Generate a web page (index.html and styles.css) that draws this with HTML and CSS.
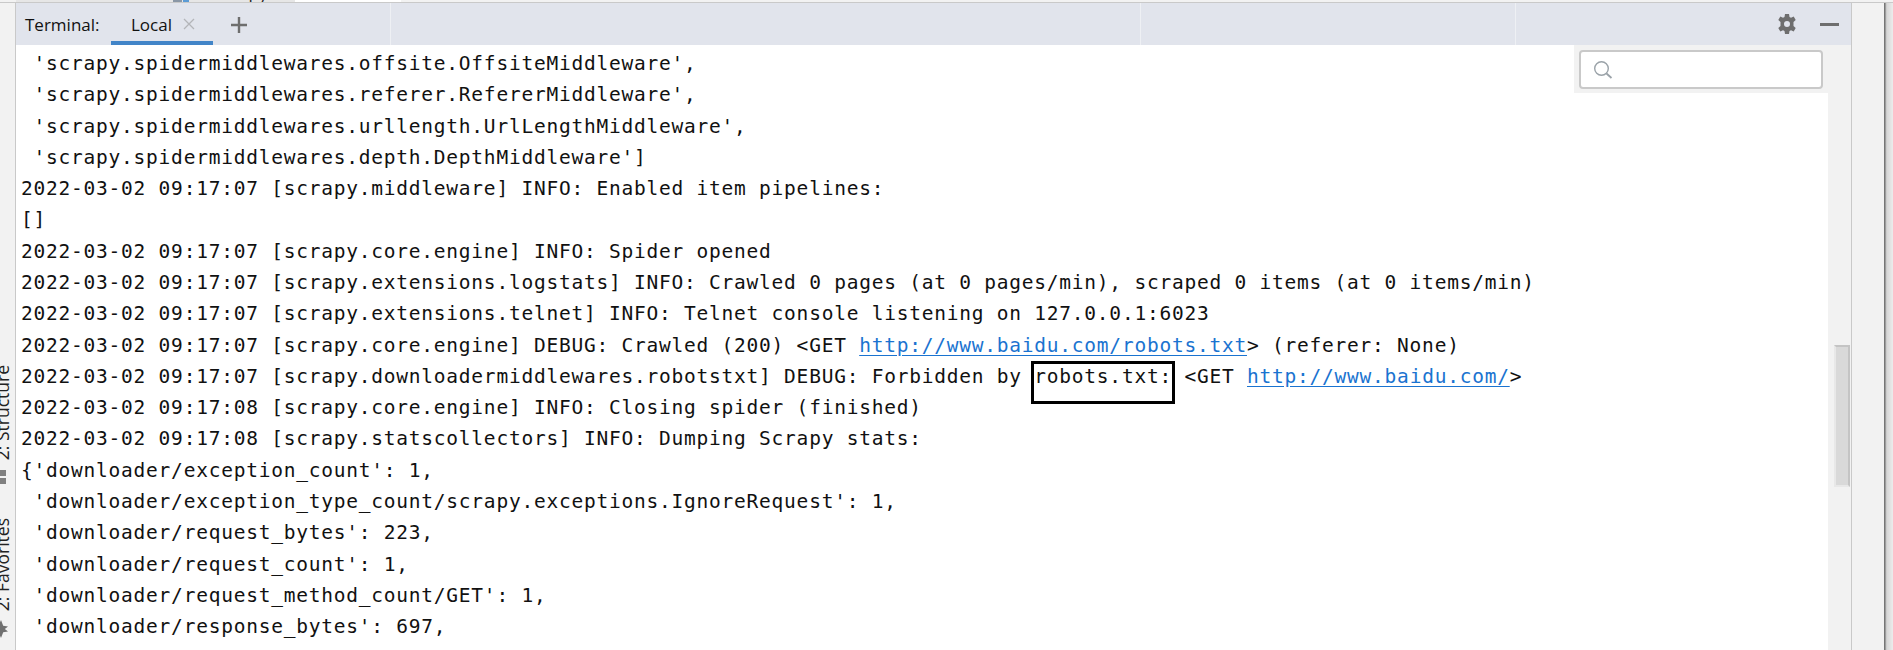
FILE: index.html
```html
<!DOCTYPE html>
<html lang="en">
<head>
<meta charset="utf-8">
<title>Terminal</title>
<link rel="stylesheet" href="styles.css">
</head>
<body>
<div class="window">
  <div class="topstrip">
    <svg class="strip-icon" width="16" height="2" viewBox="0 0 16 2"><path fill="#8a97a6" d="M0 0h9v2H0z"/><path fill="#5b9bd5" d="M10 0h6v2h-6z"/></svg>
    <span class="strip-text">baidu.py</span>
    <span class="strip-tab"></span>
  </div>
  <div class="main">
    <aside class="leftbar">
      <div class="side-item side-structure"><span class="side-label">2: Structure</span>
        <svg class="side-icon side-grid" width="6" height="14" viewBox="0 0 6 14"><path fill="#808080" d="M0 0h6v6H0zM0 8h6v6H0z"/></svg>
      </div>
      <div class="side-item side-favorites"><span class="side-label">2: Favorites</span>
        <svg class="side-icon side-star" width="8" height="18" viewBox="8 0 8 18"><path fill="#707070" d="M0 9l5.800-1.800L9 0l2.200 5.800L16 6.500l-3.200 2.500L16 11.500l-4.800.7L9 18l-3.200-7.200z"/></svg>
      </div>
    </aside>
    <section class="panel">
      <header class="tabbar">
        <span class="term-label">Terminal:</span>
        <div class="tab"><span>Local</span>
          <svg class="tab-close" width="12" height="12" viewBox="0 0 12 12"><path d="M1 1l10 10M11 1L1 11" stroke="#b3b5b9" stroke-width="1.300" fill="none"/></svg>
        </div>
        <svg class="tab-add" width="16" height="16" viewBox="0 0 16 16"><path d="M8 0v16M0 8h16" stroke="#6e6e6e" stroke-width="2.400" fill="none"/></svg>
        <i class="divider d1"></i><i class="divider d2"></i><i class="divider d3"></i>
        <svg class="gear" width="20" height="20" viewBox="0 0 20 20"><path fill-rule="evenodd" fill="#6e6e6e" d="M8 0h4l.5 2.900 1.500.8L16.700 2.600l2 3.500-2.200 1.900v4l2.200 1.900-2 3.500-2.700-1.100-1.500.8L12 20H8l-.5-2.900-1.500-.8-2.700 1.100-2-3.500 2.200-1.900V8L1.300 6.100l2-3.500L6 3.700l1.500-.8zM10 7a3 3 0 1 0 0 6 3 3 0 0 0 0-6z"/></svg>
        <i class="minimize"></i>
      </header>
      <div class="content">
        <pre class="log"> 'scrapy.spidermiddlewares.offsite.OffsiteMiddleware',
 'scrapy.spidermiddlewares.referer.RefererMiddleware',
 'scrapy.spidermiddlewares.urllength.UrlLengthMiddleware',
 'scrapy.spidermiddlewares.depth.DepthMiddleware']
2022-03-02 09:17:07 [scrapy.middleware] INFO: Enabled item pipelines:
[]
2022-03-02 09:17:07 [scrapy.core.engine] INFO: Spider opened
2022-03-02 09:17:07 [scrapy.extensions.logstats] INFO: Crawled 0 pages (at 0 pages/min), scraped 0 items (at 0 items/min)
2022-03-02 09:17:07 [scrapy.extensions.telnet] INFO: Telnet console listening on 127.0.0.1:6023
2022-03-02 09:17:07 [scrapy.core.engine] DEBUG: Crawled (200) &lt;GET <a class="link">http://www.baidu.com/robots.txt</a>&gt; (referer: None)
2022-03-02 09:17:07 [scrapy.downloadermiddlewares.robotstxt] DEBUG: Forbidden by <span class="boxed">robots.txt:</span> &lt;GET <a class="link">http://www.baidu.com/</a>&gt;
2022-03-02 09:17:08 [scrapy.core.engine] INFO: Closing spider (finished)
2022-03-02 09:17:08 [scrapy.statscollectors] INFO: Dumping Scrapy stats:
{'downloader/exception_count': 1,
 'downloader/exception_type_count/scrapy.exceptions.IgnoreRequest': 1,
 'downloader/request_bytes': 223,
 'downloader/request_count': 1,
 'downloader/request_method_count/GET': 1,
 'downloader/response_bytes': 697,</pre>
        <div class="search-wrap">
          <div class="search">
            <svg width="20" height="20" viewBox="0 0 20 20"><circle cx="8.500" cy="8.500" r="6.800" fill="none" stroke="#9aa2a8" stroke-width="1.400"/><path d="M13.500 13.500l5 4.500" stroke="#9aa2a8" stroke-width="1.800"/></svg>
          </div>
        </div>
      </div>
    </section>
    <aside class="scrolltrack"><div class="thumb"></div></aside>
    <aside class="rightbar"></aside>
    <div class="edge"></div>
  </div>
</div>
</body>
</html>
```
FILE: styles.css
```css
* { box-sizing: border-box; }
html, body { margin: 0; padding: 0; height: 100%; overflow: hidden; background: #fff; }
.window { width: 1893px; height: 650px; display: flex; flex-direction: column; font-family: "Open Sans", "Liberation Sans", sans-serif; }
.topstrip { height: 3px; background: linear-gradient(90deg, #f2f2f2 16px, #e6e6e6 16px, #e6e6e6 295px, #f2f2f2 295px); border-bottom: 1px solid #c9c9c9; flex: none; display: flex; overflow: hidden; align-items: flex-end; position: relative; }
.strip-icon { position: absolute; left: 173px; top: 0; }
.strip-text { position: absolute; left: 199px; bottom: 0; font-size: 17px; line-height: 17px; color: #222; }
.strip-tab { position: absolute; left: 295px; top: 0; width: 106px; height: 2px; background: #fff; }
.main { flex: 1; display: flex; min-height: 0; }
.leftbar { width: 16px; background: #f2f2f2; border-right: 1px solid #c9c9c9; flex: none; position: relative; overflow: hidden; }
.side-item { position: absolute; left: 0; width: 15px; display: flex; flex-direction: column; align-items: flex-start; }
.side-structure { top: 362px; }
.side-favorites { top: 515px; }
.side-label { writing-mode: vertical-rl; transform: rotate(180deg); font-size: 17.500px; line-height: 20px; color: #222; margin-left: -8px; white-space: nowrap; }
.side-icon { flex: none; }
.side-grid { margin-top: 10px; }
.side-star { margin-top: 9px; }
.panel { width: 1835px; flex: none; display: flex; flex-direction: column; }
.tabbar { height: 42px; background: #e1e4ec; position: relative; display: flex; align-items: center; flex: none; font-size: 17px; color: #111; }
.term-label { margin-left: 9px; }
.tab { position: absolute; left: 95px; top: 0; width: 102px; height: 42px; border-bottom: 4px solid #4285c8; display: flex; align-items: center; padding-left: 20px; padding-top: 4px; }
.tab-close { margin-left: 11px; }
.tab-add { position: absolute; left: 215px; top: 14px; }
.divider { position: absolute; top: 0; bottom: 0; width: 1px; background: #eef0f4; }
.d1 { left: 374px; } .d2 { left: 1124px; } .d3 { left: 1499px; }
.gear { position: absolute; left: 1761px; top: 11px; }
.minimize { position: absolute; left: 1804px; top: 20px; width: 19px; height: 3px; background: #6e6e6e; }
.content { flex: 1; position: relative; overflow: hidden; background: #fff; display: flex; padding-right: 23px; }
.content::after { content: ""; position: absolute; right: 0; top: 0; bottom: 0; width: 23px; background: #f2f2f2; }
.log { margin: 0; padding: 3px 0 0 5px; font-family: "DejaVu Sans Mono", monospace; font-size: 19.500px; letter-spacing: 0.770px; line-height: 31.280px; color: #111; white-space: pre; }
.link { color: #1a73d0; text-decoration: underline; text-underline-offset: 3px; }
.boxed { position: relative; }
.boxed::after { content: ""; position: absolute; left: -3px; right: -3px; top: -4px; height: 37px; border: 3px solid #000; }
.search-wrap { position: absolute; right: 23px; top: 0; width: 254px; height: 48px; background: #f2f2f2; padding: 5px 5px 0 5px; z-index: 1; }
.search { width: 244px; height: 39px; background: #fff; border: 2px solid #c9c9c9; border-radius: 4px; display: flex; align-items: center; padding-left: 12px; }
.scrolltrack { width: 0; position: relative; flex: none; }
.thumb { position: absolute; left: -17px; top: 342px; width: 16px; height: 142px; background: #d9d9d9; border: 2px solid #e8e8e8; border-top-color: #c4c4c4; border-right-color: #c4c4c4; z-index: 2; }
.rightbar { width: 33px; background: #f2f2f2; border-left: 1px solid #c9c9c9; flex: none; }
.edge { width: 9px; flex: none; background: linear-gradient(90deg, #666 0, #888 12%, #d6d6d6 30%, #ececec 100%); }
```
